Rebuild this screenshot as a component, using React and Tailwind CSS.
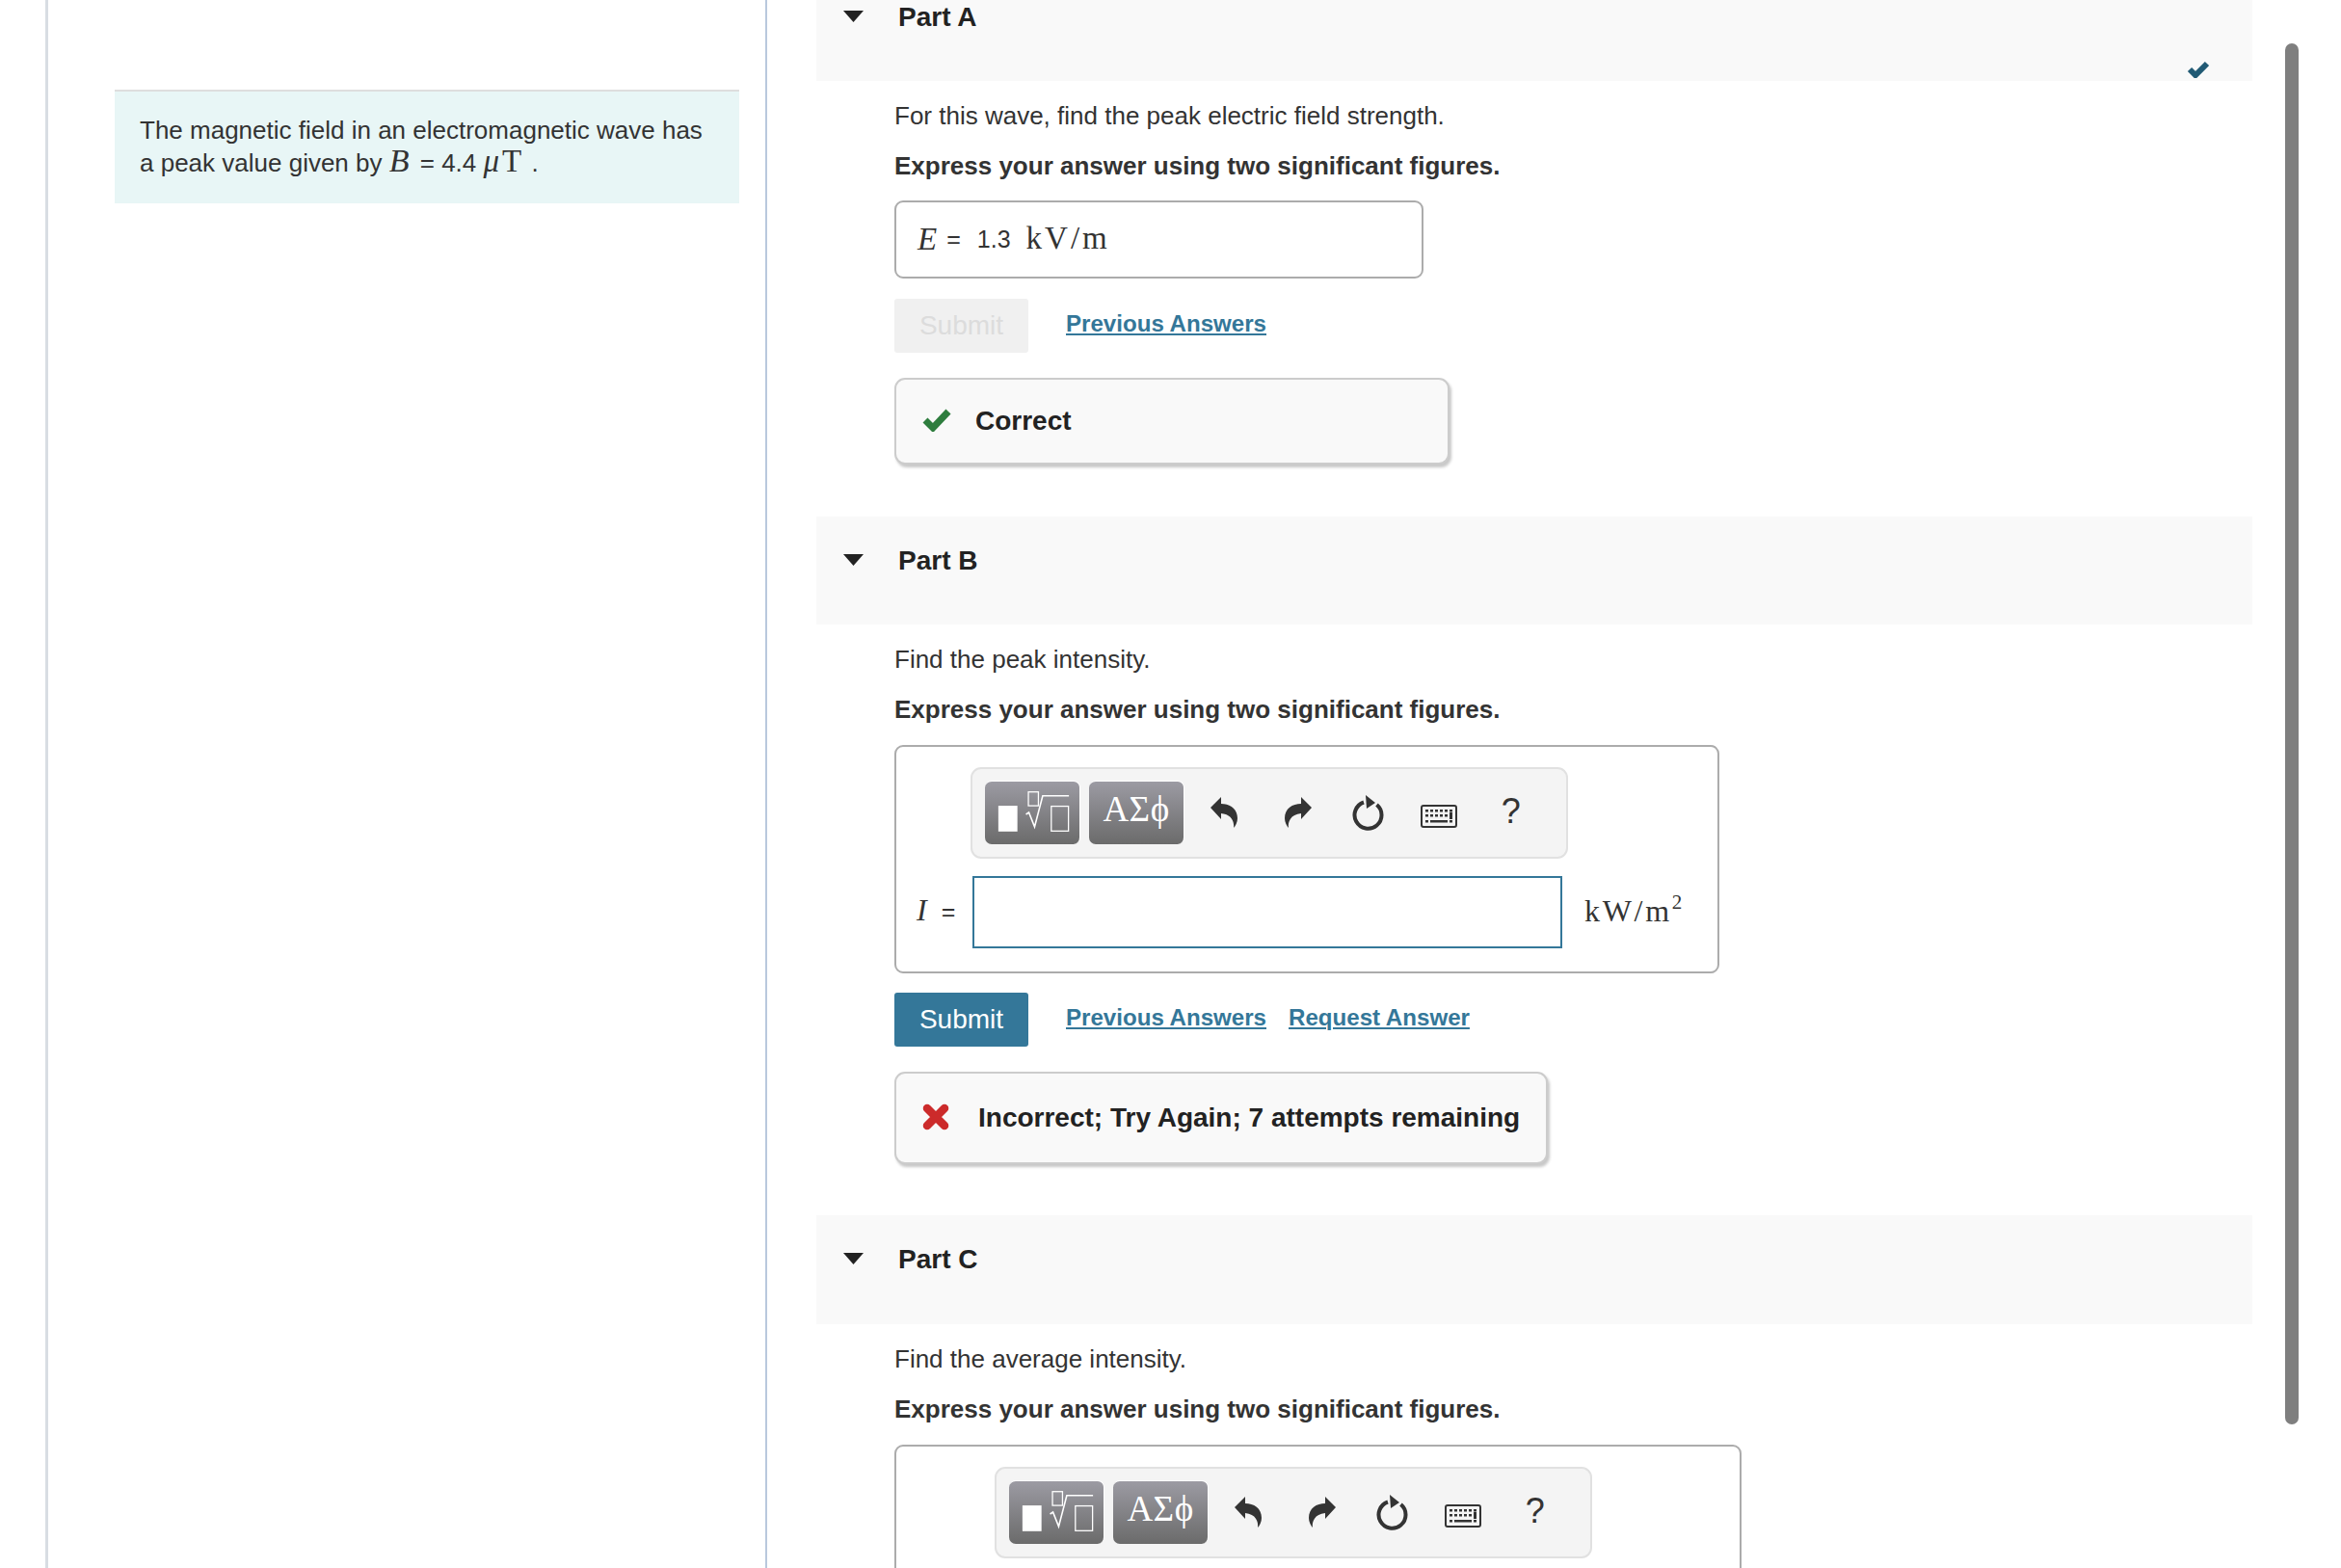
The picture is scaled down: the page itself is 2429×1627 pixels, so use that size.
import React from "react";

const sans = "[font-family:'Liberation_Sans',Arial,sans-serif]";

function Tri() {
  return (
    <svg width="21" height="12" viewBox="0 0 21 12" className="mt-[39px] ml-[28px] shrink-0">
      <polygon points="0,0 21,0 10.5,12" fill="#222" />
    </svg>
  );
}

function PartHeader({ name, extra = "" }) {
  return (
    <div className={"bg-[#f9f9f9] flex items-start " + extra}>
      <Tri />
      <div className="ml-[36px] mt-[28px] text-[28px] leading-[36px] font-bold text-[#222]">{name}</div>
    </div>
  );
}

function Prompt({ children }) {
  return (
    <>
      <p className="mt-[18px] ml-[81px] text-[26px] leading-[36px] text-[#333]">{children}</p>
      <p className="mt-[16px] ml-[81px] text-[26px] leading-[36px] font-bold text-[#333]">Express your answer using two significant figures.</p>
    </>
  );
}

function LinkText({ children }) {
  return <a className="text-[24.1px] leading-[30px] font-bold text-[#347799] underline decoration-2 underline-offset-2">{children}</a>;
}

function RootIcon() {
  return (
    <svg width="99" height="66" viewBox="0 0 99 66">
      <rect x="14" y="25" width="20" height="27" fill="#fff" />
      <rect x="45.5" y="10.5" width="10.5" height="14.5" fill="none" stroke="#fff" strokeWidth="1.3" />
      <rect x="69.5" y="25.5" width="18" height="26" fill="none" stroke="#fff" strokeWidth="1.3" />
      <path d="M43 34 L46 32 L52 47 L60.5 14.5 L88 14.5" fill="none" stroke="#fff" strokeWidth="1.6" />
    </svg>
  );
}

function UndoIcon({ flip }) {
  return (
    <svg width="28" height="32" viewBox="0 0 28 32" className={flip ? "-scale-x-100" : ""}>
      <path d="M0 11 L11 0 L11 7 C20 7 28 12 28 22 C28 26 26 30 24 32 C25 26 22 18 11 17 L11 23 Z" fill="#333" />
    </svg>
  );
}

function RefreshIcon() {
  return (
    <svg width="33" height="37" viewBox="0 0 33 37">
      <path d="M25.5 10 A14 14 0 1 1 12 7.5" fill="none" stroke="#333" strokeWidth="4" />
      <polygon points="14,0 24,8 15,14" fill="#333" />
    </svg>
  );
}

function KeyboardIcon() {
  return (
    <svg width="38" height="24" viewBox="0 0 38 24">
      <rect x="1" y="1" width="36" height="22" rx="2" fill="#f4f4f4" stroke="#333" strokeWidth="2" />
      <g fill="#333">
        <rect x="5" y="5" width="3" height="2.5" /><rect x="10" y="5" width="3" height="2.5" /><rect x="15" y="5" width="3" height="2.5" /><rect x="20" y="5" width="3" height="2.5" /><rect x="25" y="5" width="3" height="2.5" /><rect x="30" y="5" width="3" height="2.5" />
        <rect x="5" y="10" width="3" height="2.5" /><rect x="10" y="10" width="3" height="2.5" /><rect x="15" y="10" width="3" height="2.5" /><rect x="20" y="10" width="3" height="2.5" /><rect x="25" y="10" width="3" height="2.5" /><rect x="30" y="8" width="3" height="7" />
        <rect x="5" y="16" width="3" height="2.5" /><rect x="10" y="16" width="18" height="2.5" /><rect x="30" y="16" width="3" height="2.5" />
      </g>
    </svg>
  );
}

function Toolbar() {
  const btn = "w-[99px] h-[66px] rounded-[7px] border-t border-r border-white bg-gradient-to-b from-[#9c9ba3] to-[#6b6b6b] flex items-center justify-center";
  const cell = "w-[74.4px] h-[66px] flex items-center justify-center text-[#333]";
  return (
    <div className="w-[620px] h-[95px] rounded-[11px] border-2 border-[#e1e1e1] bg-[#f4f4f4] pl-[13px] pt-[12px] flex">
      <div className={btn}><RootIcon /></div>
      <div className={btn + " ml-[9px] text-white text-[37px] font-['Liberation_Serif',serif] leading-none pb-2 tracking-[0.5px]"}>ΑΣϕ</div>
      <div className={cell + " ml-[4px] pb-[1px]"}><UndoIcon /></div>
      <div className={cell + " pb-[1px] pl-[5px]"}><UndoIcon flip /></div>
      <div className={cell + " pl-[2px]"}><RefreshIcon /></div>
      <div className={cell + " pt-[7px]"}><KeyboardIcon /></div>
      <div className={cell + " pb-[3px] text-[36px] font-['Liberation_Sans',sans-serif]"}>?</div>
    </div>
  );
}

function AnswerBox({ left, width, letter, showRow = true }) {
  return (
    <div className={"mt-[19px] ml-[81px] rounded-[9px] border-2 border-[#acacac] bg-white pt-[21px] pb-[24px] " + width}>
      <div className={left}><Toolbar /></div>
      {showRow && (
        <div className="mt-[18px] flex items-center h-[75px]">
          <div className="w-[79px] pl-[21px] pb-[5px] flex items-baseline shrink-0 text-[#333]">
            <span className="text-[32px] italic tracking-[2px] font-['Liberation_Serif',serif]">{letter}</span>
            <span className="ml-[13px] text-[25px]">=</span>
          </div>
          <div className="h-[75px] w-[612px] border-2 border-[#347799] bg-white shrink-0" />
          <div className="ml-[23px] pb-[4px] text-[32px] text-[#333] font-['Liberation_Serif',serif] leading-none whitespace-nowrap tracking-[2.7px]">
            kW/m<sup className="text-[21px] leading-none -top-[13px] relative align-baseline">2</sup>
          </div>
        </div>
      )}
    </div>
  );
}

function Feedback({ width, icon, textClass, children }) {
  return (
    <div className={"ml-[81px] rounded-[11px] border-2 border-[#cccccc] bg-[#f9f9f9] shadow-[2px_3px_3px_rgba(0,0,0,0.22)] flex items-center text-[28px] font-bold text-[#222] " + width}>
      {icon}
      <span className={textClass}>{children}</span>
    </div>
  );
}

export default function App() {
  return (
    <div className={"relative w-[2429px] h-[1627px] overflow-hidden bg-white flex " + sans}>
      <div className="ml-[47px] w-[747px] h-full border-l-[3px] border-[#d8dde3] shrink-0 pt-[93px] pl-[69px]">
        <div className="w-[648px] h-[118px] border-t-2 border-[#dedede] bg-[#e8f6f6] pl-[26px] pt-[25px] text-[26px] leading-[31px] text-[#333]">
          <div>The magnetic field in an electromagnetic wave has</div>
          <div className="whitespace-nowrap">
            a peak value given by <span className="font-['Liberation_Serif',serif] italic text-[34px] leading-[31px] tracking-[4px]">B</span>
            <span> = 4.4 </span>
            <span className="font-['Liberation_Serif',serif] text-[33px] leading-[31px] tracking-[3px]"><span className="italic">μ</span>T</span>
            <span> .</span>
          </div>
        </div>
      </div>

      <div className="w-[1543px] h-full border-l-2 border-[#b9c8dd] pl-[51px] shrink-0">
        <div className="w-[1490px] -mt-[28px]">
          <PartHeader name="Part A" extra="h-[112px]" />
          <Prompt>For this wave, find the peak electric field strength.</Prompt>
          <div className="mt-[18px] ml-[81px] w-[549px] h-[81px] rounded-[9px] border-2 border-[#acacac] flex items-center pl-[22px] text-[#333]">
            <span className="text-[33px] italic tracking-[2px] font-['Liberation_Serif',serif]">E</span>
            <span className="ml-[8px] text-[25px]">=</span>
            <span className="ml-[17px] text-[25px]">1.3</span>
            <span className="ml-[16px] pb-[2px] text-[33px] tracking-[3px] font-['Liberation_Serif',serif]">kV/m</span>
          </div>
          <div className="mt-[21px] ml-[81px] flex items-start">
            <div className="w-[139px] h-[56px] rounded-[3px] bg-[#f0f0f0] text-[#dcdcdc] text-[28px] flex items-center justify-center">Submit</div>
            <div className="ml-[39px] mt-[11px]"><LinkText>Previous Answers</LinkText></div>
          </div>
          <div className="mt-[26px]">
            <Feedback
              width="w-[576px] h-[90px]"
              textClass="ml-[25px]"
              icon={
                <svg width="30" height="24" viewBox="0 0 30 24" className="ml-[27px] -mt-[2px]">
                  <path d="M3 12 L11 20 L27 3" fill="none" stroke="#2e7d3e" strokeWidth="7" />
                </svg>
              }
            >Correct</Feedback>
          </div>

          <PartHeader name="Part B" extra="mt-[54px] h-[112px]" />
          <Prompt>Find the peak intensity.</Prompt>
          <AnswerBox left="pl-[77px]" width="w-[856px]" letter="I" />
          <div className="mt-[20px] ml-[81px] flex items-start">
            <div className="w-[139px] h-[56px] rounded-[3px] bg-[#347799] text-white text-[28px] flex items-center justify-center">Submit</div>
            <div className="ml-[39px] mt-[11px] flex gap-[23px]">
              <LinkText>Previous Answers</LinkText>
              <LinkText>Request Answer</LinkText>
            </div>
          </div>
          <div className="mt-[26px]">
            <Feedback
              width="w-[678px] h-[96px]"
              textClass="ml-[30px]"
              icon={
                <svg width="28" height="28" viewBox="0 0 28 28" className="ml-[27px] -mt-[2px]">
                  <path d="M5 5 L23 23 M23 5 L5 23" fill="none" stroke="#cc2b2b" strokeWidth="8.5" strokeLinecap="round" />
                </svg>
              }
            >Incorrect; Try Again; 7 attempts remaining</Feedback>
          </div>

          <PartHeader name="Part C" extra="mt-[53px] h-[113px]" />
          <Prompt>Find the average intensity.</Prompt>
          <AnswerBox left="pl-[102px]" width="w-[879px] h-[300px]" letter="I" showRow={false} />
        </div>
      </div>

      <svg width="24" height="18" viewBox="0 0 24 18" className="absolute left-[2269px] top-[63px]">
        <path d="M3 9 L9 15 L21 3" fill="none" stroke="#215a74" strokeWidth="6" />
      </svg>
      <div className="absolute left-[2371px] top-[45px] w-[14px] h-[1433px] rounded-full bg-[#7f7f7f]" />
    </div>
  );
}
